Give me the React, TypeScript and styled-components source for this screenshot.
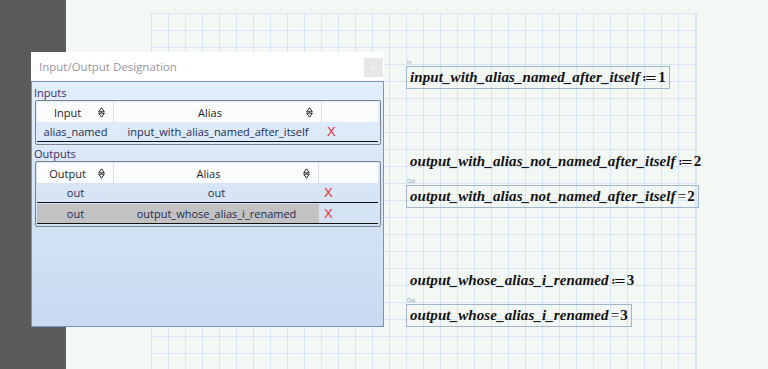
import React from "react";
import styled, { createGlobalStyle } from "styled-components";

const GlobalStyle = createGlobalStyle`
  html, body {
    margin: 0;
    padding: 0;
    overflow: hidden;
  }
  body {
    font-family: "Open Sans", "Noto Sans", sans-serif;
  }
`;

const Screen = styled.div`
  position: relative;
  display: flex;
  width: 768px;
  height: 369px;
  background: #f4f8f4;
  overflow: hidden;
`;

const Sidebar = styled.div`
  width: 66px;
  flex: none;
  background: #5b5b5b;
`;

const Canvas = styled.div`
  flex: 1;
`;

const Grid = styled.div`
  position: absolute;
  left: 151px;
  top: 13px;
  width: 545px;
  height: 356px;
  background-color: #f4f8f4;
  background-image: linear-gradient(to right, #d6e6f6 1px, transparent 1px),
    linear-gradient(to bottom, #d6e6f6 1px, transparent 1px);
  background-size: 17px 17px;
  border-right: 1px solid #d6e6f6;
`;

const Region = styled.div<{ $x: number; $y: number }>`
  position: absolute;
  left: ${({ $x }) => $x}px;
  top: ${({ $y }) => $y}px;
`;

const Tag = styled.div`
  font-family: "Liberation Sans", sans-serif;
  font-size: 5px;
  line-height: 6px;
  color: #8a98a8;
  padding-left: 1px;
`;

const MathBox = styled.div<{ $boxed?: boolean }>`
  display: inline-flex;
  align-items: center;
  height: 21px;
  padding: 0 3px;
  border: 1px solid ${({ $boxed }) => ($boxed ? "#a2b6cb" : "transparent")};
  font-family: "Liberation Serif", serif;
  font-size: 15px;
  color: #111;
  white-space: nowrap;
`;

const Var = styled.span`
  font-style: italic;
  font-weight: bold;
  letter-spacing: 0.1px;
`;

const Op = styled.span`
  margin: 0 1px 0 2px;
`;

const Num = styled.span`
  font-weight: bold;
`;

function MathLine({ name, op, value, boxed }: { name: string; op: string; value: string; boxed?: boolean }) {
  return (
    <MathBox $boxed={boxed}>
      <Var>{name}</Var>
      <Op>{op}</Op>
      <Num>{value}</Num>
    </MathBox>
  );
}

const Dialog = styled.div`
  position: absolute;
  left: 31px;
  top: 52px;
  width: 353px;
  height: 275px;
  display: flex;
  flex-direction: column;
`;

const TitleBar = styled.div`
  height: 29px;
  flex: none;
  background: #ffffff;
  display: flex;
  align-items: center;
  justify-content: space-between;
  padding: 0 1px 0 8px;
`;

const Title = styled.span`
  font-size: 11.5px;
  color: #9b95a3;
`;

const CloseButton = styled.div`
  width: 19px;
  height: 19px;
  margin-top: 2px;
  background: #e7e7e7;
  color: #f6f6f6;
  font-size: 11px;
  line-height: 18px;
  text-align: center;
`;

const Body = styled.div`
  flex: 1;
  border: 1px solid #7a92c3;
  background: linear-gradient(to bottom, #e2eefb, #c9d9f0);
  padding: 3px 2px 0 1px;
`;

const SectionLabel = styled.div`
  font-size: 11px;
  line-height: 15px;
  color: #3f2a66;
  margin-left: 1px;
`;

const Table = styled.div`
  border: 1px solid #7d838e;
  border-radius: 2px;
  padding: 1px 2px 1px 1px;
  margin: 0 0 1px 2px;
`;

const Row = styled.div<{ $cols: string }>`
  display: grid;
  grid-template-columns: ${({ $cols }) => $cols};
`;

const HeaderRow = styled(Row)`
  background: #fafcfe;
  height: 20px;
`;

const HeadCell = styled.div<{ $last?: boolean }>`
  display: flex;
  align-items: center;
  padding-right: 8px;
  border-right: ${({ $last }) => ($last ? "none" : "1px solid #dadfe6")};
  font-size: 11px;
  color: #1e1e1e;
`;

const HeadText = styled.span`
  flex: 1;
  text-align: center;
`;

const DataRow = styled(Row)`
  height: 19px;
  border-bottom: 1px solid #111;
  margin-bottom: 1px;
`;

const Cell = styled.div<{ $selected?: boolean }>`
  display: flex;
  align-items: center;
  justify-content: center;
  font-size: 11px;
  color: #1c2b55;
  background: ${({ $selected }) => ($selected ? "#c2c2c2" : "transparent")};
  white-space: nowrap;
`;

const RemoveCell = styled.div`
  display: flex;
  align-items: center;
  padding-left: 5px;
  font-family: "Liberation Sans", sans-serif;
  font-size: 13px;
  color: #ee2b3e;
`;

function SortIcon() {
  return (
    <svg width="7" height="11" viewBox="0 0 7 11">
      <path d="M0.7 4.8 L3.5 0.8 L6.3 4.8 Z M0.7 6.2 L3.5 10.2 L6.3 6.2 Z" fill="none" stroke="#222" strokeWidth="1" />
    </svg>
  );
}

type Pair = { name: string; alias: string; selected?: boolean };

function DesignTable({ head, cols, rows }: { head: string; cols: string; rows: Pair[] }) {
  return (
    <Table>
      <HeaderRow $cols={cols}>
        <HeadCell>
          <HeadText>{head}</HeadText>
          <SortIcon />
        </HeadCell>
        <HeadCell>
          <HeadText>Alias</HeadText>
          <SortIcon />
        </HeadCell>
        <HeadCell $last />
      </HeaderRow>
      {rows.map((r, i) => (
        <DataRow $cols={cols} key={i}>
          <Cell $selected={r.selected}>{r.name}</Cell>
          <Cell $selected={r.selected}>{r.alias}</Cell>
          <RemoveCell>X</RemoveCell>
        </DataRow>
      ))}
    </Table>
  );
}

export default function App() {
  return (
    <>
      <GlobalStyle />
      <Screen>
        <Sidebar />
        <Canvas>
          <Grid />
          <Region $x={406} $y={59}>
            <Tag>In</Tag>
            <MathLine boxed name="input_with_alias_named_after_itself" op="≔" value="1" />
          </Region>
          <Region $x={406} $y={149}>
            <MathLine name="output_with_alias_not_named_after_itself" op="≔" value="2" />
          </Region>
          <Region $x={406} $y={178}>
            <Tag>Out</Tag>
            <MathLine boxed name="output_with_alias_not_named_after_itself" op="=" value="2" />
          </Region>
          <Region $x={406} $y={268}>
            <MathLine name="output_whose_alias_i_renamed" op="≔" value="3" />
          </Region>
          <Region $x={406} $y={297}>
            <Tag>Out</Tag>
            <MathLine boxed name="output_whose_alias_i_renamed" op="=" value="3" />
          </Region>
        </Canvas>
        <Dialog>
          <TitleBar>
            <Title>Input/Output Designation</Title>
            <CloseButton>×</CloseButton>
          </TitleBar>
          <Body>
            <SectionLabel>Inputs</SectionLabel>
            <DesignTable
              head="Input"
              cols="77px 208px 1fr"
              rows={[{ name: "alias_named", alias: "input_with_alias_named_after_itself" }]}
            />
            <SectionLabel>Outputs</SectionLabel>
            <DesignTable
              head="Output"
              cols="77px 205px 1fr"
              rows={[
                { name: "out", alias: "out" },
                { name: "out", alias: "output_whose_alias_i_renamed", selected: true },
              ]}
            />
          </Body>
        </Dialog>
      </Screen>
    </>
  );
}
